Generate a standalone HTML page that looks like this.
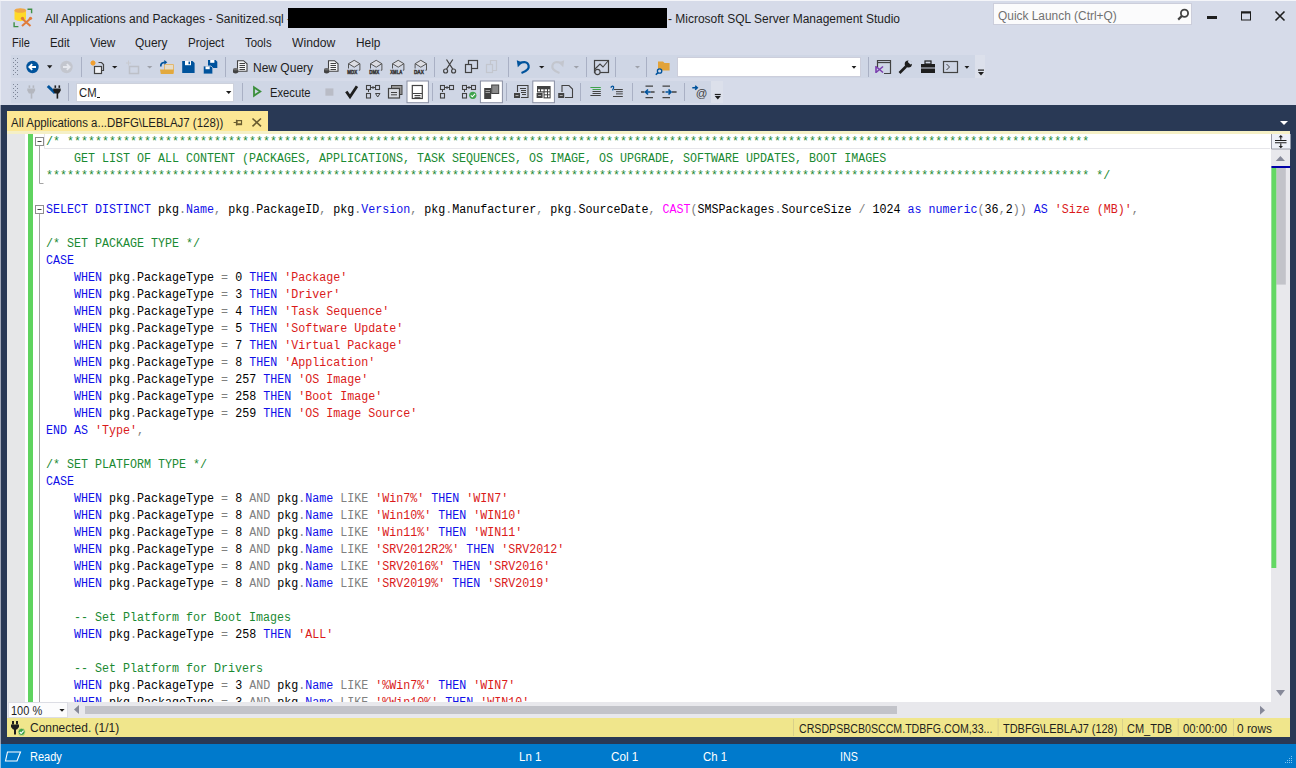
<!DOCTYPE html>
<html><head><meta charset="utf-8"><style>
html,body{margin:0;padding:0;}
body{width:1296px;height:768px;overflow:hidden;position:relative;background:#D6DBE9;}
body>div,body>svg{position:absolute;}
.ts{font-family:"Liberation Sans",sans-serif;white-space:pre;line-height:12px;transform-origin:0 0;}
#code{left:45.5px;top:134px;font-family:"Liberation Mono",monospace;font-size:12.5px;line-height:17px;white-space:pre;transform:scaleX(0.93333);transform-origin:0 0;width:1313px;height:568px;overflow:hidden;}
</style></head><body>
<div class="ts" style="left: 45px; top: 12.71px; font-size: 12px; color: rgb(30, 30, 30); transform: scaleX(0.9998);">All Applications and Packages - Sanitized.sql -</div>
<div style="left:288px;top:8px;width:379px;height:20px;background:#000;"></div>
<div class="ts" style="left: 668px; top: 12.71px; font-size: 12px; color: rgb(30, 30, 30); transform: scaleX(0.9985);">- Microsoft SQL Server Management Studio</div>
<div style="left:993px;top:3px;width:199px;height:22px;background:#FBFBFC;border:1px solid #CCCEDB;box-sizing:border-box"></div>
<div class="ts" style="left: 998px; top: 9.5px; font-size: 12px; color: rgb(113, 113, 113); transform: scaleX(0.9922);">Quick Launch (Ctrl+Q)</div>
<div class="ts" style="left: 11.5px; top: 36.5px; font-size: 12px; color: rgb(30, 30, 30); transform: scaleX(0.9185);">File</div>
<div class="ts" style="left: 50px; top: 36.5px; font-size: 12px; color: rgb(30, 30, 30); transform: scaleX(0.952);">Edit</div>
<div class="ts" style="left: 89.8px; top: 36.5px; font-size: 12px; color: rgb(30, 30, 30); transform: scaleX(0.9839);">View</div>
<div class="ts" style="left: 135px; top: 36.5px; font-size: 12px; color: rgb(30, 30, 30); transform: scaleX(0.9939);">Query</div>
<div class="ts" style="left: 188px; top: 36.5px; font-size: 12px; color: rgb(30, 30, 30); transform: scaleX(0.9674);">Project</div>
<div class="ts" style="left: 244.8px; top: 36.5px; font-size: 12px; color: rgb(30, 30, 30); transform: scaleX(0.9494);">Tools</div>
<div class="ts" style="left: 292px; top: 36.5px; font-size: 12px; color: rgb(30, 30, 30); transform: scaleX(1.0131);">Window</div>
<div class="ts" style="left: 355.5px; top: 36.5px; font-size: 12px; color: rgb(30, 30, 30); transform: scaleX(0.9911);">Help</div>
<div style="left:11px;top:55px;width:964px;height:23px;background:#CFD6E5;"></div>
<div style="left:11px;top:81px;width:700px;height:22px;background:#CFD6E5;"></div>
<div class="ts" style="left: 253px; top: 62.21px; font-size: 12px; color: rgb(30, 30, 30); transform: scaleX(1.0012);">New Query</div>
<div style="left:677px;top:57px;width:184px;height:20px;background:#FFF;border:1px solid #CCCEDB;box-sizing:border-box"></div>
<div style="left:76px;top:82.5px;width:158px;height:19px;background:#FFF;border:1px solid #CDD1DC;box-sizing:border-box"></div>
<div class="ts" style="left: 78.7px; top: 87.21px; font-size: 12px; color: rgb(30, 30, 30); transform: scaleX(0.9406);">CM</div>
<div style="left:96.5px;top:97px;width:3.5px;height:1.2px;background:#1e1e1e;"></div>
<div class="ts" style="left: 270px; top: 86.71px; font-size: 12px; color: rgb(30, 30, 30); transform: scaleX(0.9366);">Execute</div>
<div style="left:0px;top:105px;width:1296px;height:639px;background:#293955;"></div>
<div style="left:7px;top:111px;width:261px;height:22px;background:#FCE794;"></div>
<div class="ts" style="left: 11.3px; top: 116.75px; font-size: 12px; color: rgb(30, 30, 30); transform: scaleX(0.9533);">All Applications a...DBFG\LEBLAJ7 (128))</div>
<div style="left:7px;top:131px;width:1283px;height:3px;background:#F5F0C6;"></div>
<div style="left:7px;top:134px;width:1283px;height:568px;background:#FFFFFF;"></div>
<div style="left:7px;top:134px;width:18px;height:568px;background:#E6E7E8;"></div>
<div style="left:27.5px;top:134px;width:5px;height:568px;background:#5FD35F;"></div>
<div style="left:1271px;top:134px;width:19px;height:568px;background:#E8E8EC;"></div>
<div style="left:44px;top:134px;width:1225.5px;height:15px;background:#FFFFFF;border-bottom:1px solid #E6E6EA;border-left:1px solid #E6E6EA;box-sizing:border-box"></div>
<div style="left:7px;top:702px;width:1283px;height:16px;background:#E8E8EC;"></div>
<div style="left:8px;top:702px;width:60px;height:16px;background:#FCFCFD;border:1px solid #DCDDE4;box-sizing:border-box"></div>
<div class="ts" style="left: 11px; top: 704.71px; font-size: 12px; color: rgb(30, 30, 30); transform: scaleX(0.9158);">100 %</div>
<div style="left:85px;top:706px;width:812px;height:8px;background:#C2C3C9;"></div>
<div style="left:7px;top:718px;width:1283px;height:19px;background:#F0E68C;"></div>
<div class="ts" style="left: 29.7px; top: 722px; font-size: 12px; color: rgb(30, 30, 30); transform: scaleX(0.9972);">Connected. (1/1)</div>
<div class="ts" style="left: 798.5px; top: 723px; font-size: 12px; color: rgb(30, 30, 30); transform: scaleX(0.8843);">CRSDPSBCB0SCCM.TDBFG.COM,33...</div>
<div class="ts" style="left: 1002.7px; top: 723px; font-size: 12px; color: rgb(30, 30, 30); transform: scaleX(0.9117);">TDBFG\LEBLAJ7 (128)</div>
<div class="ts" style="left: 1126.8px; top: 723px; font-size: 12px; color: rgb(30, 30, 30); transform: scaleX(0.9156);">CM_TDB</div>
<div class="ts" style="left: 1182.7px; top: 723px; font-size: 12px; color: rgb(30, 30, 30); transform: scaleX(0.9409);">00:00:00</div>
<div class="ts" style="left: 1237px; top: 723px; font-size: 12px; color: rgb(30, 30, 30); transform: scaleX(0.9881);">0 rows</div>
<div style="left:0px;top:744px;width:1296px;height:24px;background:#007ACC;"></div>
<div class="ts" style="left: 29.6px; top: 751px; font-size: 12px; color: rgb(255, 255, 255); transform: scaleX(0.919);">Ready</div>
<div class="ts" style="left: 519px; top: 751px; font-size: 12px; color: rgb(255, 255, 255); transform: scaleX(0.9561);">Ln 1</div>
<div class="ts" style="left: 610.9px; top: 751px; font-size: 12px; color: rgb(255, 255, 255); transform: scaleX(0.9748);">Col 1</div>
<div class="ts" style="left: 703px; top: 751px; font-size: 12px; color: rgb(255, 255, 255); transform: scaleX(0.9488);">Ch 1</div>
<div class="ts" style="left: 839.6px; top: 751px; font-size: 12px; color: rgb(255, 255, 255); transform: scaleX(0.8927);">INS</div>
<div id="code"><span style="color:#1A8A32">/* **************************************************************************************************************************************************</span>
<span style="color:#1A8A32">    GET LIST OF ALL CONTENT (PACKAGES, APPLICATIONS, TASK SEQUENCES, OS IMAGE, OS UPGRADE, SOFTWARE UPDATES, BOOT IMAGES</span>
<span style="color:#1A8A32">***************************************************************************************************************************************************** */</span>

<span style="color:#1010E8">SELECT</span> <span style="color:#1010E8">DISTINCT</span> <span style="color:#000000">pkg</span><span style="color:#808080">.</span><span style="color:#1010E8">Name</span><span style="color:#808080">,</span> <span style="color:#000000">pkg</span><span style="color:#808080">.</span><span style="color:#000000">PackageID</span><span style="color:#808080">,</span> <span style="color:#000000">pkg</span><span style="color:#808080">.</span><span style="color:#1010E8">Version</span><span style="color:#808080">,</span> <span style="color:#000000">pkg</span><span style="color:#808080">.</span><span style="color:#000000">Manufacturer</span><span style="color:#808080">,</span> <span style="color:#000000">pkg</span><span style="color:#808080">.</span><span style="color:#000000">SourceDate</span><span style="color:#808080">,</span> <span style="color:#FF00FF">CAST</span><span style="color:#808080">(</span><span style="color:#000000">SMSPackages</span><span style="color:#808080">.</span><span style="color:#000000">SourceSize</span> <span style="color:#808080">/</span> <span style="color:#000000">1024</span> <span style="color:#1010E8">as</span> <span style="color:#1010E8">numeric</span><span style="color:#808080">(</span><span style="color:#000000">36</span><span style="color:#808080">,</span><span style="color:#000000">2</span><span style="color:#808080">)</span><span style="color:#808080">)</span> <span style="color:#1010E8">AS</span> <span style="color:#DA1A1A">'Size (MB)'</span><span style="color:#808080">,</span>

<span style="color:#1A8A32">/* SET PACKAGE TYPE */</span>
<span style="color:#1010E8">CASE</span>
    <span style="color:#1010E8">WHEN</span> <span style="color:#000000">pkg</span><span style="color:#808080">.</span><span style="color:#000000">PackageType</span> <span style="color:#808080">=</span> <span style="color:#000000">0</span> <span style="color:#1010E8">THEN</span> <span style="color:#DA1A1A">'Package'</span>
    <span style="color:#1010E8">WHEN</span> <span style="color:#000000">pkg</span><span style="color:#808080">.</span><span style="color:#000000">PackageType</span> <span style="color:#808080">=</span> <span style="color:#000000">3</span> <span style="color:#1010E8">THEN</span> <span style="color:#DA1A1A">'Driver'</span>
    <span style="color:#1010E8">WHEN</span> <span style="color:#000000">pkg</span><span style="color:#808080">.</span><span style="color:#000000">PackageType</span> <span style="color:#808080">=</span> <span style="color:#000000">4</span> <span style="color:#1010E8">THEN</span> <span style="color:#DA1A1A">'Task Sequence'</span>
    <span style="color:#1010E8">WHEN</span> <span style="color:#000000">pkg</span><span style="color:#808080">.</span><span style="color:#000000">PackageType</span> <span style="color:#808080">=</span> <span style="color:#000000">5</span> <span style="color:#1010E8">THEN</span> <span style="color:#DA1A1A">'Software Update'</span>
    <span style="color:#1010E8">WHEN</span> <span style="color:#000000">pkg</span><span style="color:#808080">.</span><span style="color:#000000">PackageType</span> <span style="color:#808080">=</span> <span style="color:#000000">7</span> <span style="color:#1010E8">THEN</span> <span style="color:#DA1A1A">'Virtual Package'</span>
    <span style="color:#1010E8">WHEN</span> <span style="color:#000000">pkg</span><span style="color:#808080">.</span><span style="color:#000000">PackageType</span> <span style="color:#808080">=</span> <span style="color:#000000">8</span> <span style="color:#1010E8">THEN</span> <span style="color:#DA1A1A">'Application'</span>
    <span style="color:#1010E8">WHEN</span> <span style="color:#000000">pkg</span><span style="color:#808080">.</span><span style="color:#000000">PackageType</span> <span style="color:#808080">=</span> <span style="color:#000000">257</span> <span style="color:#1010E8">THEN</span> <span style="color:#DA1A1A">'OS Image'</span>
    <span style="color:#1010E8">WHEN</span> <span style="color:#000000">pkg</span><span style="color:#808080">.</span><span style="color:#000000">PackageType</span> <span style="color:#808080">=</span> <span style="color:#000000">258</span> <span style="color:#1010E8">THEN</span> <span style="color:#DA1A1A">'Boot Image'</span>
    <span style="color:#1010E8">WHEN</span> <span style="color:#000000">pkg</span><span style="color:#808080">.</span><span style="color:#000000">PackageType</span> <span style="color:#808080">=</span> <span style="color:#000000">259</span> <span style="color:#1010E8">THEN</span> <span style="color:#DA1A1A">'OS Image Source'</span>
<span style="color:#1010E8">END</span> <span style="color:#1010E8">AS</span> <span style="color:#DA1A1A">'Type'</span><span style="color:#808080">,</span>

<span style="color:#1A8A32">/* SET PLATFORM TYPE */</span>
<span style="color:#1010E8">CASE</span>
    <span style="color:#1010E8">WHEN</span> <span style="color:#000000">pkg</span><span style="color:#808080">.</span><span style="color:#000000">PackageType</span> <span style="color:#808080">=</span> <span style="color:#000000">8</span> <span style="color:#808080">AND</span> <span style="color:#000000">pkg</span><span style="color:#808080">.</span><span style="color:#1010E8">Name</span> <span style="color:#808080">LIKE</span> <span style="color:#DA1A1A">'Win7%'</span> <span style="color:#1010E8">THEN</span> <span style="color:#DA1A1A">'WIN7'</span>
    <span style="color:#1010E8">WHEN</span> <span style="color:#000000">pkg</span><span style="color:#808080">.</span><span style="color:#000000">PackageType</span> <span style="color:#808080">=</span> <span style="color:#000000">8</span> <span style="color:#808080">AND</span> <span style="color:#000000">pkg</span><span style="color:#808080">.</span><span style="color:#1010E8">Name</span> <span style="color:#808080">LIKE</span> <span style="color:#DA1A1A">'Win10%'</span> <span style="color:#1010E8">THEN</span> <span style="color:#DA1A1A">'WIN10'</span>
    <span style="color:#1010E8">WHEN</span> <span style="color:#000000">pkg</span><span style="color:#808080">.</span><span style="color:#000000">PackageType</span> <span style="color:#808080">=</span> <span style="color:#000000">8</span> <span style="color:#808080">AND</span> <span style="color:#000000">pkg</span><span style="color:#808080">.</span><span style="color:#1010E8">Name</span> <span style="color:#808080">LIKE</span> <span style="color:#DA1A1A">'Win11%'</span> <span style="color:#1010E8">THEN</span> <span style="color:#DA1A1A">'WIN11'</span>
    <span style="color:#1010E8">WHEN</span> <span style="color:#000000">pkg</span><span style="color:#808080">.</span><span style="color:#000000">PackageType</span> <span style="color:#808080">=</span> <span style="color:#000000">8</span> <span style="color:#808080">AND</span> <span style="color:#000000">pkg</span><span style="color:#808080">.</span><span style="color:#1010E8">Name</span> <span style="color:#808080">LIKE</span> <span style="color:#DA1A1A">'SRV2012R2%'</span> <span style="color:#1010E8">THEN</span> <span style="color:#DA1A1A">'SRV2012'</span>
    <span style="color:#1010E8">WHEN</span> <span style="color:#000000">pkg</span><span style="color:#808080">.</span><span style="color:#000000">PackageType</span> <span style="color:#808080">=</span> <span style="color:#000000">8</span> <span style="color:#808080">AND</span> <span style="color:#000000">pkg</span><span style="color:#808080">.</span><span style="color:#1010E8">Name</span> <span style="color:#808080">LIKE</span> <span style="color:#DA1A1A">'SRV2016%'</span> <span style="color:#1010E8">THEN</span> <span style="color:#DA1A1A">'SRV2016'</span>
    <span style="color:#1010E8">WHEN</span> <span style="color:#000000">pkg</span><span style="color:#808080">.</span><span style="color:#000000">PackageType</span> <span style="color:#808080">=</span> <span style="color:#000000">8</span> <span style="color:#808080">AND</span> <span style="color:#000000">pkg</span><span style="color:#808080">.</span><span style="color:#1010E8">Name</span> <span style="color:#808080">LIKE</span> <span style="color:#DA1A1A">'SRV2019%'</span> <span style="color:#1010E8">THEN</span> <span style="color:#DA1A1A">'SRV2019'</span>

<span style="color:#1A8A32">    -- Set Platform for Boot Images</span>
    <span style="color:#1010E8">WHEN</span> <span style="color:#000000">pkg</span><span style="color:#808080">.</span><span style="color:#000000">PackageType</span> <span style="color:#808080">=</span> <span style="color:#000000">258</span> <span style="color:#1010E8">THEN</span> <span style="color:#DA1A1A">'ALL'</span>

<span style="color:#1A8A32">    -- Set Platform for Drivers</span>
    <span style="color:#1010E8">WHEN</span> <span style="color:#000000">pkg</span><span style="color:#808080">.</span><span style="color:#000000">PackageType</span> <span style="color:#808080">=</span> <span style="color:#000000">3</span> <span style="color:#808080">AND</span> <span style="color:#000000">pkg</span><span style="color:#808080">.</span><span style="color:#1010E8">Name</span> <span style="color:#808080">LIKE</span> <span style="color:#DA1A1A">'%Win7%'</span> <span style="color:#1010E8">THEN</span> <span style="color:#DA1A1A">'WIN7'</span>
    <span style="color:#1010E8">WHEN</span> <span style="color:#000000">pkg</span><span style="color:#808080">.</span><span style="color:#000000">PackageType</span> <span style="color:#808080">=</span> <span style="color:#000000">3</span> <span style="color:#808080">AND</span> <span style="color:#000000">pkg</span><span style="color:#808080">.</span><span style="color:#1010E8">Name</span> <span style="color:#808080">LIKE</span> <span style="color:#DA1A1A">'%Win10%'</span> <span style="color:#1010E8">THEN</span> <span style="color:#DA1A1A">'WIN10'</span></div>
<svg style="left:0;top:0" width="1296" height="768"><rect x="13" y="58" width="1" height="1" fill="#7D8597"></rect><rect x="17" y="58" width="1" height="1" fill="#7D8597"></rect>
<rect x="13" y="62" width="1" height="1" fill="#7D8597"></rect><rect x="17" y="62" width="1" height="1" fill="#7D8597"></rect>
<rect x="13" y="66" width="1" height="1" fill="#7D8597"></rect><rect x="17" y="66" width="1" height="1" fill="#7D8597"></rect>
<rect x="13" y="70" width="1" height="1" fill="#7D8597"></rect><rect x="17" y="70" width="1" height="1" fill="#7D8597"></rect>
<rect x="13" y="74" width="1" height="1" fill="#7D8597"></rect><rect x="17" y="74" width="1" height="1" fill="#7D8597"></rect>
<rect x="15" y="60" width="1" height="1" fill="#7D8597"></rect>
<rect x="15" y="64" width="1" height="1" fill="#7D8597"></rect>
<rect x="15" y="68" width="1" height="1" fill="#7D8597"></rect>
<rect x="15" y="72" width="1" height="1" fill="#7D8597"></rect>
<rect x="13" y="84" width="1" height="1" fill="#7D8597"></rect><rect x="17" y="84" width="1" height="1" fill="#7D8597"></rect>
<rect x="13" y="88" width="1" height="1" fill="#7D8597"></rect><rect x="17" y="88" width="1" height="1" fill="#7D8597"></rect>
<rect x="13" y="92" width="1" height="1" fill="#7D8597"></rect><rect x="17" y="92" width="1" height="1" fill="#7D8597"></rect>
<rect x="13" y="96" width="1" height="1" fill="#7D8597"></rect><rect x="17" y="96" width="1" height="1" fill="#7D8597"></rect>
<rect x="15" y="86" width="1" height="1" fill="#7D8597"></rect>
<rect x="15" y="90" width="1" height="1" fill="#7D8597"></rect>
<rect x="15" y="94" width="1" height="1" fill="#7D8597"></rect>
<rect x="15" y="98" width="1" height="1" fill="#7D8597"></rect>
<rect x="81" y="57" width="1" height="20" fill="#A9B0C4"></rect>
<rect x="225" y="57" width="1" height="20" fill="#A9B0C4"></rect>
<rect x="434" y="57" width="1" height="20" fill="#A9B0C4"></rect>
<rect x="508" y="57" width="1" height="20" fill="#A9B0C4"></rect>
<rect x="586" y="57" width="1" height="20" fill="#A9B0C4"></rect>
<rect x="615" y="57" width="1" height="20" fill="#A9B0C4"></rect>
<rect x="646" y="57" width="1" height="20" fill="#A9B0C4"></rect>
<rect x="868" y="57" width="1" height="20" fill="#A9B0C4"></rect>
<rect x="68" y="83" width="1" height="18" fill="#A9B0C4"></rect>
<rect x="242" y="83" width="1" height="18" fill="#A9B0C4"></rect>
<rect x="432" y="83" width="1" height="18" fill="#A9B0C4"></rect>
<rect x="506" y="83" width="1" height="18" fill="#A9B0C4"></rect>
<rect x="580" y="83" width="1" height="18" fill="#A9B0C4"></rect>
<rect x="632" y="83" width="1" height="18" fill="#A9B0C4"></rect>
<rect x="684" y="83" width="1" height="18" fill="#A9B0C4"></rect>
<g>
<path d="M14.5 10.5 Q20.3 7 26 10.5 V19.5 Q20.3 23 14.5 19.5Z" fill="#FFD928"></path>
<ellipse cx="20.3" cy="10.5" rx="5.8" ry="2.3" fill="#F0A848"></ellipse>
<path d="M27.5 9.2H31.6V13.2" fill="none" stroke="#3F8F46" stroke-width="1.4"></path>
<path d="M14.1 22.2V26.6H18.4" fill="none" stroke="#3F8F46" stroke-width="1.4"></path>
<path d="M22 18.5L30.5 26M30.5 18.5L22 26" stroke="#E07B39" stroke-width="2"></path>
<circle cx="22.5" cy="18.3" r="1.6" fill="#E07B39"></circle><circle cx="30.5" cy="18.3" r="1.6" fill="#E07B39"></circle>
</g>
<circle cx="1184.5" cy="13.2" r="3.6" fill="none" stroke="#424242" stroke-width="1.8"></circle><path d="M1182 15.8L1178.2 19.6" stroke="#424242" stroke-width="2.2"></path>
<rect x="1207" y="16" width="10" height="3" fill="#1E1E1E"></rect>
<rect x="1241.5" y="12" width="9" height="8" fill="none" stroke="#1E1E1E" stroke-width="1"></rect><rect x="1241" y="11.5" width="10" height="2" fill="#1E1E1E"></rect>
<path d="M1275.5 11.5L1284.5 20.5M1284.5 11.5L1275.5 20.5" stroke="#1E1E1E" stroke-width="1.6"></path>
<circle cx="32.5" cy="67" r="6.2" fill="#00539C"></circle><path d="M36 67H29.5M32.2 64.2L29.3 67L32.2 69.8" fill="none" stroke="#fff" stroke-width="1.8"></path>
<path d="M47 65.2H52.4L49.7 68.6Z" fill="#1E1E1E"></path>
<circle cx="66.5" cy="67" r="6.2" fill="#C3C6CE"></circle><path d="M63 67H69.5M66.8 64.2L69.7 67L66.8 69.8" fill="none" stroke="#E6E8EE" stroke-width="1.8"></path>
<path d="M98.5 62.5H101.5L103.5 64.5V70.5H100.5" fill="none" stroke="#424242" stroke-width="1.2"></path>
<rect x="94.5" y="66.5" width="7" height="7" fill="#F2F3F6" stroke="#424242" stroke-width="1.2"></rect>
<circle cx="93" cy="63" r="2.2" fill="#F0A030"></circle><path d="M90 63H96M93 60V66M91 61L95 65M95 61L91 65" stroke="#F0A030" stroke-width="0.8"></path>
<path d="M112 65.9H117.4L114.7 68.6Z" fill="#1E1E1E"></path>
<rect x="129.5" y="66.5" width="9" height="7" fill="none" stroke="#BDC0C8" stroke-width="1.5"></rect>
<path d="M126 63H131M128.5 60.5V65.5" stroke="#C8CAD0" stroke-width="1"></path>
<path d="M147 65.9H152.4L149.7 68.6Z" fill="#9EA1AA"></path>
<path d="M164.5 64.5H173.5V73.5H164.5Z" fill="#E6DCC8" stroke="#E3B870" stroke-width="1"></path>
<path d="M160 69.5H173.8L173 74H160.8Z" fill="#E2A93E"></path>
<path d="M160.8 66.5Q160.6 62.5 164.8 62.3" fill="none" stroke="#00539C" stroke-width="1.7"></path><path d="M164.3 59.9L167.3 62.3L164.3 64.7Z" fill="#00539C"></path>
<path d="M182.2 61H192.5L194.6 63.1V72.9H182.2Z" fill="#00539C"></path><rect x="185" y="61" width="6" height="4.2" fill="#fff"></rect><rect x="188.5" y="61.6" width="1.5" height="2.6" fill="#00539C"></rect>
<path d="M208 60H215.5L217.3 61.8V68H208Z" fill="#00539C"></path><rect x="210.2" y="60" width="4.2" height="2.8" fill="#fff"></rect>
<path d="M203.3 66H211L212.8 67.8V74H203.3Z" fill="#00539C" stroke="#CFD6E5" stroke-width="0.8"></path><rect x="205.5" y="66.4" width="4.2" height="2.8" fill="#fff"></rect>
<path d="M237.5 60.7H243.5L247 63.8V71.2H237.5Z" fill="#F5F6F8" stroke="#424242" stroke-width="1.1"></path>
<path d="M239.5 63.5H245M239.5 65.5H245M239.5 67.5H245M239.5 69.5H245" stroke="#424242" stroke-width="1"></path>
<path d="M233 69.3V72.5Q235.6 74.4 238.2 72.5V69.3Z" fill="#424242"></path><ellipse cx="235.6" cy="69.3" rx="2.6" ry="1.2" fill="#6a6a6a"></ellipse>
<path d="M328.5 60.7H334.5L338 63.8V71.2H328.5Z" fill="#F5F6F8" stroke="#424242" stroke-width="1.1"></path>
<path d="M330.5 63.5H336M330.5 65.5H336M330.5 67.5H336M330.5 69.5H336" stroke="#424242" stroke-width="1"></path>
<path d="M324 69.3V72.5Q326.6 74.4 329.2 72.5V69.3Z" fill="#424242"></path><ellipse cx="326.6" cy="69.3" rx="2.6" ry="1.2" fill="#6a6a6a"></ellipse>
<path d="M348.5 63.7L354.2 60.3L359.9 63.7L354.2 67.2Z" fill="#DCDDE3" stroke="#555" stroke-width="1"></path>
<path d="M348.5 63.7V68.5M359.9 63.7V70.2H358.8" fill="none" stroke="#555" stroke-width="1"></path>
<text x="352.3" y="73.8" font-family="Liberation Sans" font-weight="bold" font-size="6" fill="#333" stroke="#333" stroke-width="0.45" text-anchor="middle" textLength="10" lengthAdjust="spacingAndGlyphs">MDX</text>
<path d="M370.5 63.7L376.2 60.3L381.9 63.7L376.2 67.2Z" fill="#DCDDE3" stroke="#555" stroke-width="1"></path>
<path d="M370.5 63.7V68.5M381.9 63.7V70.2H380.8" fill="none" stroke="#555" stroke-width="1"></path>
<text x="374.3" y="73.8" font-family="Liberation Sans" font-weight="bold" font-size="6" fill="#333" stroke="#333" stroke-width="0.45" text-anchor="middle" textLength="10" lengthAdjust="spacingAndGlyphs">DMX</text>
<path d="M392.5 63.7L398.2 60.3L403.9 63.7L398.2 67.2Z" fill="#DCDDE3" stroke="#555" stroke-width="1"></path>
<path d="M392.5 63.7V68.5M403.9 63.7V70.2H402.8" fill="none" stroke="#555" stroke-width="1"></path>
<text x="396.3" y="73.8" font-family="Liberation Sans" font-weight="bold" font-size="6" fill="#333" stroke="#333" stroke-width="0.45" text-anchor="middle" textLength="12" lengthAdjust="spacingAndGlyphs">XMLA</text>
<path d="M415.1 63.7L420.8 60.3L426.5 63.7L420.8 67.2Z" fill="#DCDDE3" stroke="#555" stroke-width="1"></path>
<path d="M415.1 63.7V68.5M426.5 63.7V70.2H425.40000000000003" fill="none" stroke="#555" stroke-width="1"></path>
<text x="418.90000000000003" y="73.8" font-family="Liberation Sans" font-weight="bold" font-size="6" fill="#333" stroke="#333" stroke-width="0.45" text-anchor="middle" textLength="10" lengthAdjust="spacingAndGlyphs">DAX</text>
<circle cx="445.6" cy="71" r="2" fill="none" stroke="#424242" stroke-width="1.2"></circle><circle cx="453.6" cy="71" r="2" fill="none" stroke="#424242" stroke-width="1.2"></circle>
<path d="M446.5 69.2L452.8 59.5M452.8 69.2L446.5 59.5" stroke="#424242" stroke-width="1.2"></path>
<rect x="468.5" y="60.5" width="9" height="8" fill="none" stroke="#424242" stroke-width="1.2"></rect><rect x="465.5" y="64.5" width="6" height="8" fill="#CFD6E5" stroke="#424242" stroke-width="1.2"></rect>
<rect x="486.5" y="64.5" width="6" height="8" fill="none" stroke="#C3C6CE" stroke-width="1.2"></rect><path d="M490.5 64.5V60.5H496.5V70.5H492.5" fill="none" stroke="#C3C6CE" stroke-width="1.2"></path>
<path d="M519 63.5Q527 60 528.6 65.5Q529.8 70 521.5 73" fill="none" stroke="#00539C" stroke-width="2.2"></path><path d="M516.8 60.3L517.8 67.2L522.5 62.5Z" fill="#00539C"></path>
<path d="M539 65.9H544.4L541.7 68.6Z" fill="#1E1E1E"></path>
<path d="M562 63.5Q554 60 552.4 65.5Q551.2 70 559.5 73" fill="none" stroke="#C3C6CE" stroke-width="2.2"></path><path d="M564.2 60.3L563.2 67.2L558.5 62.5Z" fill="#C3C6CE"></path>
<path d="M573.7 65.9H579L576.35 68.6Z" fill="#9EA1AA"></path>
<rect x="594.5" y="60.5" width="14" height="12" fill="none" stroke="#424242" stroke-width="1.2"></rect><path d="M595 69L600 64L603 67L608 61" fill="none" stroke="#424242" stroke-width="1.1"></path>
<circle cx="597.5" cy="72" r="2.6" fill="#CFD6E5" stroke="#424242" stroke-width="1.1"></circle>
<path d="M635 65.9H640L637.5 68.6Z" fill="#9EA1AA"></path>
<path d="M658 61.5H663L664.5 63H669.6V70.5H658Z" fill="#E2A33A"></path><circle cx="659.6" cy="71" r="2.2" fill="#CFD6E5" stroke="#00539C" stroke-width="1.3"></circle><path d="M658 72.6L655.8 74.8" stroke="#00539C" stroke-width="1.6"></path>
<path d="M851.6 66H856.4L854.0 68.8Z" fill="#1E1E1E"></path>
<path d="M877.5 68V60.5H890.5V73.5H884" fill="none" stroke="#424242" stroke-width="1.2"></path><path d="M877.5 62.5H890.5" stroke="#424242" stroke-width="1.3"></path>
<path d="M876 66.5L883 72.5M876 72.5L883 66.5M876 66V73" stroke="#7B3FAF" stroke-width="1.6"></path>
<path d="M899.5 73L906 66.5" stroke="#1E1E1E" stroke-width="2.6"></path><circle cx="908.3" cy="64" r="3.6" fill="#1E1E1E"></circle><path d="M909 59.3L913 63.3L910.5 64.5L907.8 62Z" fill="#CFD6E5"></path>
<rect x="921" y="64" width="14" height="9" fill="#1E1E1E"></rect><rect x="925" y="61" width="6" height="3" fill="none" stroke="#1E1E1E" stroke-width="1.2"></rect><rect x="921" y="67.5" width="14" height="1" fill="#CFD6E5"></rect>
<rect x="943.5" y="61.5" width="14" height="11" fill="none" stroke="#424242" stroke-width="1.2"></rect><path d="M946.5 64L949.5 67L946.5 70" fill="none" stroke="#424242" stroke-width="1"></path>
<path d="M964.5 66H969.3L966.9 68.8Z" fill="#1E1E1E"></path>
<rect x="975" y="55" width="10" height="23" fill="#DCE0EB"></rect><rect x="978" y="69.5" width="6" height="1.2" fill="#1E1E1E"></rect><path d="M978 72H984L981.0 75.5Z" fill="#1E1E1E"></path>
<rect x="711" y="81" width="12" height="22" fill="#DCE0EB"></rect><rect x="714.8" y="93.9" width="6" height="1.2" fill="#1E1E1E"></rect><path d="M714.8 96H720.8L717.8 99.5Z" fill="#1E1E1E"></path>
<g fill="#B4B7BF"><rect x="28.6" y="85.4" width="1.6" height="2.5"></rect><rect x="32.6" y="85.4" width="1.6" height="2.5"></rect>
<path d="M27.3 88.5H35.1V90.5L33.5 93.5H28.9L27.3 90.5Z"></path><rect x="30.7" y="93" width="1.6" height="5.6"></rect></g>
<path d="M47.8 86L55 93" stroke="#00539C" stroke-width="3"></path>
<g fill="#1E1E1E"><rect x="54.5" y="85.4" width="1.6" height="2.5"></rect><rect x="58.5" y="85.4" width="1.6" height="2.5"></rect>
<path d="M53.2 88.5H60.7V90.5L59 93.5H54.8L53.2 90.5Z"></path><rect x="56.6" y="93" width="1.6" height="5.6"></rect></g>
<path d="M226 91H231.4L228.7 94Z" fill="#1E1E1E"></path>
<path d="M254 87.3L260.3 91.5L254 95.7Z" fill="none" stroke="#3B8F3B" stroke-width="1.8" stroke-linejoin="miter"></path>
<rect x="325.4" y="88.4" width="8" height="7.3" fill="#B9BCC6"></rect>
<path d="M346.3 91.5L350 96.8L357 86.3" fill="none" stroke="#1E1E1E" stroke-width="2.8"></path>
<rect x="366.5" y="85.5" width="4" height="4" fill="none" stroke="#424242" stroke-width="1.1"></rect><rect x="375.5" y="85.5" width="4" height="4" fill="none" stroke="#424242" stroke-width="1.1"></rect>
<path d="M370.5 87.5H375.5M373 86V89M368.5 89.5V92" stroke="#424242" stroke-width="1"></path><rect x="366.5" y="93.5" width="4" height="4.5" fill="none" stroke="#424242" stroke-width="1.1"></rect><path d="M375.5 93.5H380L377.7 97Z" fill="none" stroke="#424242" stroke-width="1"></path>
<rect x="391.5" y="85.5" width="10.5" height="9" fill="#9a9a9a" stroke="#424242" stroke-width="1"></rect><rect x="388.5" y="88.5" width="11" height="9.5" fill="#D8DBE2" stroke="#424242" stroke-width="1.2"></rect>
<path d="M391 92.5H397M391 94.8H397" stroke="#424242" stroke-width="1"></path>
<rect x="407" y="81" width="21.4" height="21.7" fill="#fff" stroke="#8A8FA3" stroke-width="1"></rect>
<rect x="412.3" y="85.5" width="10" height="13" fill="none" stroke="#424242" stroke-width="1.2"></rect><path d="M413 93.5H422M414.5 95.5H420.5M414.5 97.3H420.5" stroke="#424242" stroke-width="1"></path>
<rect x="440.5" y="85.5" width="4" height="4" fill="none" stroke="#424242" stroke-width="1.1"></rect><rect x="449.5" y="85.5" width="4" height="4" fill="none" stroke="#424242" stroke-width="1.1"></rect>
<path d="M444.5 87.5H449.5M447 86V89M442.5 89.5V92" stroke="#424242" stroke-width="1"></path><rect x="440.5" y="93.5" width="4" height="4.5" fill="none" stroke="#424242" stroke-width="1.1"></rect>
<rect x="462.5" y="85.5" width="4" height="4" fill="none" stroke="#424242" stroke-width="1.1"></rect><rect x="471.5" y="85.5" width="4" height="4" fill="none" stroke="#424242" stroke-width="1.1"></rect>
<path d="M466.5 87.5H471.5M469 86V89M464.5 89.5V92" stroke="#424242" stroke-width="1"></path><rect x="462.5" y="93.5" width="4" height="4.5" fill="none" stroke="#424242" stroke-width="1.1"></rect><circle cx="472.8" cy="95.3" r="3.6" fill="#3FA34D"></circle><path d="M470.8 95.3L472.3 96.8L475 93.8" fill="none" stroke="#fff" stroke-width="1.1"></path>
<rect x="480.4" y="81" width="22" height="21.7" fill="#fff" stroke="#8A8FA3" stroke-width="1"></rect>
<rect x="491.7" y="85" width="7" height="8.5" fill="#8a8a8a" stroke="#424242" stroke-width="1"></rect><rect x="484.2" y="88" width="7" height="11" fill="#424242"></rect><path d="M485.5 90.5H490M485.5 92.5H490" stroke="#bbb" stroke-width="0.8"></path>
<path d="M517.5 92V85.5H528V97.5H521" fill="none" stroke="#424242" stroke-width="1.1"></path><path d="M520 88.5H526M521 90.5H526M521 92.5H526M522 94.5H526" stroke="#424242" stroke-width="1"></path><rect x="514" y="93" width="6" height="5" fill="#424242"></rect><path d="M515.5 95.5H518.5" stroke="#ccc" stroke-width="0.8"></path>
<rect x="532.8" y="81" width="21.6" height="21.7" fill="#fff" stroke="#8A8FA3" stroke-width="1"></rect>
<rect x="537" y="86" width="13.6" height="12.4" fill="#424242"></rect><g fill="#fff"><rect x="541" y="89.3" width="2.6" height="2"></rect><rect x="544.6" y="89.3" width="2.4" height="2"></rect><rect x="548" y="89.3" width="1.6" height="2"></rect><rect x="544.6" y="92.3" width="2.4" height="2"></rect><rect x="548" y="92.3" width="1.6" height="2"></rect><rect x="544.6" y="95.3" width="2.4" height="2"></rect><rect x="548" y="95.3" width="1.6" height="2"></rect><rect x="538" y="89.3" width="2" height="2"></rect></g><rect x="536" y="92.5" width="7.5" height="6.5" fill="#fff"></rect><rect x="536.6" y="93" width="6" height="5" fill="#424242"></rect><path d="M538.1 95.5H541.1" stroke="#ccc" stroke-width="0.8"></path>
<path d="M562 92V85.5H569L572.5 89V97.5H565" fill="none" stroke="#424242" stroke-width="1.1"></path><rect x="558.2" y="93" width="6" height="5" fill="#424242"></rect><path d="M559.7 95.5H562.7" stroke="#ccc" stroke-width="0.8"></path>
<path d="M590.4 87.5H600.8M592.5 89.5H600.8" stroke="#3FA34D" stroke-width="1"></path><path d="M592.5 91.5H600.8M592.5 93.5H600.8M590.4 95.5H600.8" stroke="#424242" stroke-width="1"></path>
<path d="M614 89.5H622.8M616 91.7H622.8M616 93.9H622.8M613 96.5H622.8" stroke="#424242" stroke-width="1"></path><path d="M610.8 87.6Q612 85.5 613.5 86.5Q614.2 88 612.5 90.3" fill="none" stroke="#00539C" stroke-width="1.3"></path>
<path d="M645.5 86.2H653M641 92H644.5M645.5 97.6H653M650.5 92H654.6" stroke="#424242" stroke-width="1.3"></path><path d="M645.5 92H650.5M648 89.5L645.5 92L648 94.5" fill="none" stroke="#00539C" stroke-width="1.7"></path>
<path d="M662.5 86.2H670M672 92H676.6M662.5 97.6H670M662.2 92H664.5" stroke="#424242" stroke-width="1.3"></path><path d="M665.5 92H671M668.5 89.5L671 92L668.5 94.5" fill="none" stroke="#00539C" stroke-width="1.7"></path>
<text x="695.8" y="97.3" font-family="Liberation Sans" font-size="11.5" fill="#424242">@</text><path d="M692.3 87.8H697M695.2 85.8L697.3 87.8L695.2 89.8" fill="none" stroke="#00539C" stroke-width="1.5"></path>
<path d="M233.6 122.5H236.5M236.5 119.8V125.4" stroke="#6B5D30" stroke-width="1.2"></path><rect x="237" y="120.6" width="4.5" height="4" fill="none" stroke="#6B5D30" stroke-width="1.2"></rect><path d="M237.3 123.8H241.7" stroke="#6B5D30" stroke-width="1"></path>
<path d="M252.5 118.5L261 126.3M261 118.5L252.5 126.3" stroke="#6B5D30" stroke-width="1.6"></path>
<path d="M1280 121H1288L1284 125Z" fill="#fff"></path>
<rect x="35.5" y="137.5" width="8" height="8" fill="#fff" stroke="#8E8E8E" stroke-width="1"></rect><path d="M37.5 141.5H41.5" stroke="#424242" stroke-width="1"></path>
<path d="M39.5 146V183.5H43.5" fill="none" stroke="#A5A5A5" stroke-width="1"></path>
<rect x="35.5" y="205.5" width="8" height="8" fill="#fff" stroke="#8E8E8E" stroke-width="1"></rect><path d="M37.5 209.5H41.5" stroke="#424242" stroke-width="1"></path>
<path d="M39.5 214V702" fill="none" stroke="#A5A5A5" stroke-width="1"></path>
<rect x="1271.5" y="134" width="19" height="15" fill="#EEF1F8"></rect><path d="M1271.5 134V149H1290.5" fill="none" stroke="#9A9CA8" stroke-width="1"></path>
<path d="M1275 140.5H1286.5M1275 142.7H1286.5M1280.8 136V139.7M1280.8 143.5V147.2" stroke="#1E1E1E" stroke-width="1.1"></path><path d="M1278.6 137.3L1280.8 135L1283 137.3ZM1278.6 146L1280.8 148.3L1283 146Z" fill="#1E1E1E"></path>
<path d="M1275.8 161H1285L1280.4 156Z" fill="#868999"></path>
<rect x="1271.4" y="166" width="18.8" height="2" fill="#0000A8"></rect>
<rect x="1276.3" y="168" width="9.5" height="116.6" fill="#C2C3C9"></rect>
<rect x="1271.4" y="168" width="4.9" height="400" fill="#64D864"></rect>
<path d="M1276 690H1285L1280.5 696Z" fill="#868999"></path>
<path d="M79 705L74 709.5L79 714Z" fill="#868999"></path><path d="M1260 705.7L1265 710.2L1260 714.8Z" fill="#868999"></path>
<path d="M59.4 709H64.6L62.0 711.8Z" fill="#1E1E1E"></path>
<g fill="#1E1E1E"><rect x="12" y="721" width="2" height="3.5"></rect><rect x="16" y="721" width="2" height="3.5"></rect><path d="M11 724.5H19V727L17 729.5H13L11 727Z"></path><rect x="14" y="729" width="2" height="5.5"></rect></g>
<circle cx="21.6" cy="731.9" r="3.6" fill="#3FA34D" stroke="#F0E68C" stroke-width="0.8"></circle><path d="M19.8 732L21.2 733.4L23.6 730.6" fill="none" stroke="#fff" stroke-width="1.1"></path>
<rect x="793" y="719" width="1" height="17" fill="#D9D08A"></rect>
<rect x="997.6" y="719" width="1" height="17" fill="#D9D08A"></rect>
<rect x="1122" y="719" width="1" height="17" fill="#D9D08A"></rect>
<rect x="1177.7" y="719" width="1" height="17" fill="#D9D08A"></rect>
<rect x="1233" y="719" width="1" height="17" fill="#D9D08A"></rect>
<path d="M7.5 752H20.5L17 761H5.5Z" fill="none" stroke="#fff" stroke-width="1.1"></path>
<rect x="1291" y="756" width="1" height="1" fill="#7FC4F2"></rect>
<rect x="1291" y="758" width="1" height="1" fill="#7FC4F2"></rect>
<rect x="1289" y="758" width="1" height="1" fill="#7FC4F2"></rect>
<rect x="1291" y="760" width="1" height="1" fill="#7FC4F2"></rect>
<rect x="1289" y="760" width="1" height="1" fill="#7FC4F2"></rect>
<rect x="1287" y="760" width="1" height="1" fill="#7FC4F2"></rect>
<rect x="1291" y="762" width="1" height="1" fill="#7FC4F2"></rect>
<rect x="1289" y="762" width="1" height="1" fill="#7FC4F2"></rect>
<rect x="1287" y="762" width="1" height="1" fill="#7FC4F2"></rect>
<rect x="1285" y="762" width="1" height="1" fill="#7FC4F2"></rect>
<rect x="0" y="0" width="1296" height="1" fill="#F4F5F9"></rect><rect x="0" y="0" width="1" height="768" fill="#EEF0F6" opacity="0.6"></rect></svg>
</body></html>
